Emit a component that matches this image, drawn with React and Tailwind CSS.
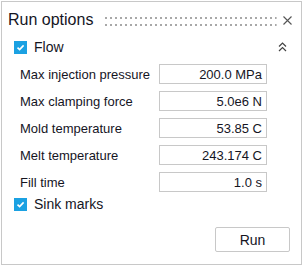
const rows = [
  ["Max injection pressure", "200.0 MPa"],
  ["Max clamping force", "5.0e6 N"],
  ["Mold temperature", "53.85 C"],
  ["Melt temperature", "243.174 C"],
  ["Fill time", "1.0 s"],
];

function Check() {
  return (
    <span className="w-[13px] h-[13px] bg-[#1ba1e2] flex items-center justify-center shrink-0">
      <svg width="9" height="9" viewBox="0 0 9 9">
        <path d="M1.5 4.7 L3.6 6.6 L7.6 2.4" fill="none" stroke="white" strokeWidth="1.6" />
      </svg>
    </span>
  );
}

function Grip() {
  return (
    <svg width="100%" height="9" className="block">
      <defs>
        <pattern id="dots" width="5" height="7" patternUnits="userSpaceOnUse">
          <rect x="0" y="0" width="2" height="2" fill="#a8a8a8" />
        </pattern>
      </defs>
      <rect x="0" y="0" width="100%" height="9" fill="url(#dots)" />
    </svg>
  );
}

export default function App() {
  return (
    <div className="w-[303px] h-[266px] bg-white pt-px pl-px" style={{ fontFamily: '"Liberation Sans", Arial, sans-serif' }}>
      <div className="w-[301px] h-[264px] border border-[#c8c8c8] flex flex-col text-[#15151f]">
        <div className="h-[24px] mt-[6px] flex items-center pl-[6px] pr-[9px]">
          <span className="text-[16px] leading-none whitespace-nowrap shrink-0">Run options</span>
          <div className="ml-[12px] mr-[6px] mt-[3px] flex-1 min-w-0">
            <Grip />
          </div>
          <svg width="9" height="9" viewBox="0 0 9 9" className="shrink-0">
            <path d="M0.5 0.5 L8.5 8.5 M8.5 0.5 L0.5 8.5" stroke="#555" strokeWidth="1.1" />
          </svg>
        </div>

        <div className="h-[20px] mt-[5px] flex items-center pl-[12px] pr-[14px]">
          <Check />
          <span className="ml-[7px] text-[14px] leading-none">Flow</span>
          <svg width="9" height="10" viewBox="0 0 9 10" className="ml-auto">
            <path d="M1 4.5 L4.5 1 L8 4.5 M1 9 L4.5 5.5 L8 9" fill="none" stroke="#444" strokeWidth="1.2" />
          </svg>
        </div>

        <div className="flex flex-col gap-[7px] mt-[7px] pl-[18px]">
          {rows.map(([label, value]) => (
            <div key={label} className="flex items-center h-[20px]">
              <span className="w-[139px] text-[13px] leading-none">{label}</span>
              <div className="w-[108px] h-[20px] border border-[#c8c8c8] flex items-center justify-end pr-[4px] text-[13px] leading-none">
                {value}
              </div>
            </div>
          ))}
        </div>

        <div className="h-[20px] mt-[2px] flex items-center pl-[12px]">
          <Check />
          <span className="ml-[7px] text-[14px] leading-none">Sink marks</span>
        </div>

        <div className="flex justify-end pr-[11px] mt-[13px]">
          <button className="w-[75px] h-[25px] border border-[#c8c8c8] rounded-[2px] bg-white text-[14px] leading-none">
            Run
          </button>
        </div>
      </div>
    </div>
  );
}
